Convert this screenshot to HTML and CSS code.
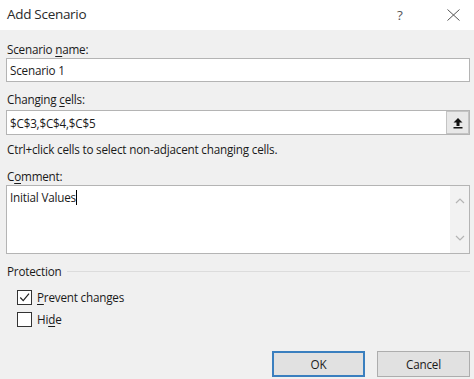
FILE: index.html
```html
<!DOCTYPE html>
<html lang="en">
<head>
<meta charset="utf-8">
<title>Add Scenario</title>
<link rel="stylesheet" href="styles.css">
</head>
<body>
<div class="dialog">
  <div class="titlebar">
    <span class="title">Add Scenario</span>
    <span class="help">?</span>
    <span class="close">
      <svg width="13" height="12" viewBox="0 0 13 12"><path d="M0.5 0.5 L12.5 11.5 M12.5 0.5 L0.5 11.5" stroke="#555" stroke-width="1" fill="none"/></svg>
    </span>
  </div>
  <div class="body">
    <div class="label first">Scenario <u>n</u>ame:</div>
    <div class="field name">Scenario 1</div>

    <div class="label second">Changing <u>c</u>ells:</div>
    <div class="field cells">
      <span class="fieldtext">$C$3,$C$4,$C$5</span>
      <span class="collapse">
        <svg width="12" height="12" viewBox="0 0 12 12"><path d="M6 1 L10.5 5.5 H7.5 V9 H4.5 V5.5 H1.5 Z" fill="#111"/><rect x="1.5" y="10" width="9" height="1.5" fill="#111"/></svg>
      </span>
    </div>
    <div class="hint">Ctrl+click cells to select non-adjacent changing cells.</div>

    <div class="label third">C<u>o</u>mment:</div>
    <div class="textarea">
      <div class="tatext">Initial Values<span class="caret"></span></div>
      <div class="scroll">
        <svg width="10" height="6" viewBox="0 0 10 6"><path d="M1 5 L5 1 L9 5" stroke="#b5b5b5" stroke-width="1.2" fill="none"/></svg>
        <svg width="10" height="6" viewBox="0 0 10 6"><path d="M1 1 L5 5 L9 1" stroke="#b5b5b5" stroke-width="1.2" fill="none"/></svg>
      </div>
    </div>

    <div class="group">
      <span class="grouptitle">Protection</span>
      <span class="groupline"></span>
    </div>
    <div class="check one">
      <span class="box">
        <svg width="13" height="13" viewBox="0 0 13 13"><path d="M2.3 6.5 L5.2 9.6 L11 2.6" stroke="#222" stroke-width="1.2" fill="none"/></svg>
      </span>
      <span><u>P</u>revent changes</span>
    </div>
    <div class="check two">
      <span class="box"></span>
      <span>Hi<u>d</u>e</span>
    </div>

    <div class="buttons">
      <div class="btn default">OK</div>
      <div class="btn">Cancel</div>
    </div>
  </div>
</div>
</body>
</html>
```
FILE: styles.css
```css
html, body {
  margin: 0;
  padding: 0;
}
body {
  background: #f0f0f0;
  font-family: "Open Sans", "Noto Sans", "Liberation Sans", sans-serif;
  font-size: 11.7px;
  letter-spacing: -0.2px;
  color: #1a1a1a;
  width: 474px;
  height: 379px;
  overflow: hidden;
}
.dialog {
  display: flex;
  flex-direction: column;
  height: 379px;
}
.titlebar {
  height: 30px;
  background: #ffffff;
  display: flex;
  align-items: center;
  padding-left: 7px;
}
.title {
  font-size: 13.5px;
  letter-spacing: -0.3px;
  color: #2a2a2a;
  flex: 1;
  margin-top: -2px;
}
.help {
  font-size: 13.5px;
  color: #555;
  width: 8px;
  margin-right: 42px;
}
.close {
  width: 13px;
  height: 12px;
  margin-right: 14px;
  display: flex;
}
.body {
  padding: 0 4px 0 6px;
  display: flex;
  flex-direction: column;
}
.label {
  height: 18px;
  line-height: 18px;
  padding-left: 1px;
}
.label.first { margin-top: 10px; }
.label.second { margin-top: 8px; margin-bottom: 2px; }
.label.third { margin-top: 9px; }
u {
  text-decoration: underline;
  text-underline-offset: 2px;
}
.field {
  height: 24px;
  background: #fff;
  border: 1px solid #b4b4b4;
  box-sizing: border-box;
  display: flex;
  align-items: center;
  padding-left: 3px;
}
.field.cells {
  height: 25px;
  padding-right: 0;
}
.fieldtext {
  flex: 1;
}
.collapse {
  width: 23px;
  height: 23px;
  box-sizing: border-box;
  border: 1px solid #c4c4c4;
  background: #e8e8e8;
  display: flex;
  align-items: center;
  justify-content: center;
}
.hint {
  margin-top: 5px;
  height: 18px;
  line-height: 18px;
  padding-left: 1px;
}
.textarea {
  height: 69px;
  background: #fff;
  border: 1px solid #b4b4b4;
  box-sizing: border-box;
  display: flex;
}
.tatext {
  flex: 1;
  padding: 2px 3px;
  line-height: 18px;
}
.caret {
  display: inline-block;
  width: 1px;
  height: 15px;
  background: #000;
  vertical-align: -3px;
}
.scroll {
  width: 19px;
  background: #f2f2f2;
  display: flex;
  flex-direction: column;
  align-items: center;
  justify-content: space-between;
  padding: 12px 0 12px;
}
.group {
  display: flex;
  align-items: center;
  margin-top: 8px;
  height: 18px;
}
.grouptitle {
  padding-left: 1px;
  margin-right: 6px;
}
.groupline {
  flex: 1;
  height: 1px;
  background: #dcdcdc;
}
.check {
  display: flex;
  align-items: center;
  height: 18px;
  padding-left: 11px;
}
.check.one { margin-top: 8px; }
.check.two { margin-top: 4px; }
.box {
  width: 15px;
  height: 15px;
  box-sizing: border-box;
  border: 1px solid #333;
  background: #fff;
  margin-right: 5px;
  display: flex;
  align-items: center;
  justify-content: center;
}
.buttons {
  display: flex;
  justify-content: flex-end;
  gap: 12px;
  margin-top: 23px;
}
.btn {
  width: 93px;
  height: 26px;
  box-sizing: border-box;
  border: 1px solid #adadad;
  background: #e1e1e1;
  display: flex;
  align-items: center;
  justify-content: center;
}
.btn.default {
  border: 2px solid #3a7fbf;
}
```
